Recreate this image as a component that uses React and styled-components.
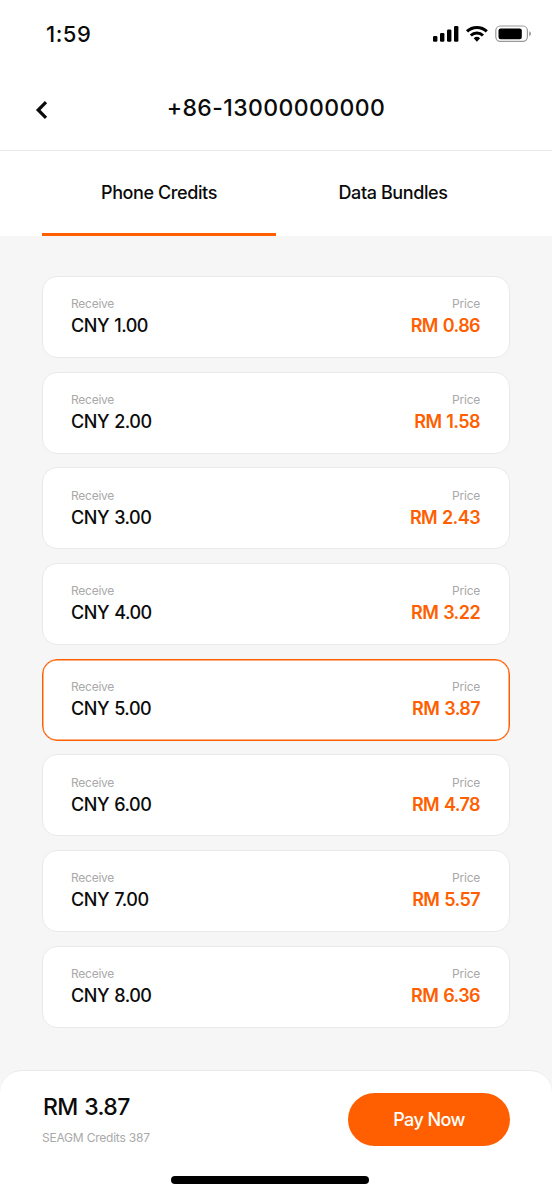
import React, { useState } from 'react';
import styled, { createGlobalStyle, ThemeProvider } from 'styled-components';

const theme = {
  primary: '#ff5f00',
  black: '#0b0b0b',
  muted: '#a9a9a9',
  line: '#e9e9e9',
  canvas: '#f6f6f6',
};

const packages = [
  { id: 1, receive: 'CNY 1.00', price: 'RM 0.86' },
  { id: 2, receive: 'CNY 2.00', price: 'RM 1.58' },
  { id: 3, receive: 'CNY 3.00', price: 'RM 2.43' },
  { id: 4, receive: 'CNY 4.00', price: 'RM 3.22' },
  { id: 5, receive: 'CNY 5.00', price: 'RM 3.87' },
  { id: 6, receive: 'CNY 6.00', price: 'RM 4.78' },
  { id: 7, receive: 'CNY 7.00', price: 'RM 5.57' },
  { id: 8, receive: 'CNY 8.00', price: 'RM 6.36' },
];

const tabs = ['Phone Credits', 'Data Bundles'];

const GlobalStyle = createGlobalStyle`
  * {
    box-sizing: border-box;
  }
  body {
    margin: 0;
    font-family: Inter, 'Liberation Sans', sans-serif;
    -webkit-font-smoothing: antialiased;
  }
  button {
    margin: 0;
    padding: 0;
    border: 0;
    background: none;
    font: inherit;
    color: inherit;
    cursor: pointer;
  }
`;

const Screen = styled.div`
  display: flex;
  flex-direction: column;
  width: 552px;
  height: 1195px;
  overflow: hidden;
  color: ${({ theme: t }) => t.black};
  background: ${({ theme: t }) => t.canvas};
`;

const StatusBar = styled.div`
  display: flex;
  flex: none;
  align-items: center;
  justify-content: space-between;
  height: 68px;
  padding: 0 20px 0 46px;
  background: white;
`;

const Clock = styled.span`
  font-size: 22px;
  line-height: 24px;
  font-weight: 500;
  letter-spacing: 0.5px;
`;

const StatusIcons = styled.div`
  display: flex;
  align-items: center;
`;

const Header = styled.header`
  display: grid;
  flex: none;
  grid-template-columns: 84px 1fr 84px;
  align-items: center;
  height: 83px;
  padding-bottom: 2px;
  border-bottom: 1px solid ${({ theme: t }) => t.line};
  background: white;
`;

const BackButton = styled.button`
  display: flex;
  padding-left: 35px;
  padding-top: 3px;
`;

const Title = styled.h1`
  margin: 0;
  text-align: center;
  font-size: 23px;
  line-height: 28px;
  font-weight: 500;
  letter-spacing: 0.4px;
  white-space: nowrap;
`;

const TabBar = styled.nav`
  display: flex;
  flex: none;
  height: 85px;
  padding: 0 42px;
  background: white;
`;

const Tab = styled.button`
  flex: 1;
  padding-top: 1px;
  border-bottom: 3px solid
    ${({ $active, theme: t }) => ($active ? t.primary : 'transparent')};
  font-size: 18px;
  font-weight: 500;
  letter-spacing: -0.4px;
`;

const PackageList = styled.main`
  display: flex;
  flex: 1;
  flex-direction: column;
  gap: 13.67px;
  min-height: 0;
  padding: 40px 42px 0;
`;

const PackageCard = styled.button`
  display: flex;
  flex: none;
  justify-content: space-between;
  height: 82px;
  padding: 19.4px 29px 0 28px;
  border: 1px solid
    ${({ $selected, theme: t }) => ($selected ? t.primary : t.line)};
  box-shadow: ${({ $selected, theme: t }) =>
    $selected ? `inset 0 0 0 0.5px ${t.primary}` : 'none'};
  border-radius: 15px;
  background: white;
`;

const Amount = styled.div`
  display: flex;
  flex-direction: column;
  align-items: ${({ $end }) => ($end ? 'flex-end' : 'flex-start')};
`;

const Label = styled.span`
  font-size: 12px;
  line-height: 16px;
  letter-spacing: -0.25px;
  color: ${({ theme: t }) => t.muted};
`;

const Value = styled.span`
  margin-top: 2px;
  font-size: 18px;
  line-height: 24px;
  font-weight: 500;
  letter-spacing: -0.45px;
  word-spacing: 0.8px;
  white-space: nowrap;
`;

const Price = styled(Value)`
  font-weight: 600;
  letter-spacing: -0.6px;
  word-spacing: 1px;
  color: ${({ theme: t }) => t.primary};
`;

const Footer = styled.footer`
  display: flex;
  flex: none;
  flex-direction: column;
  justify-content: space-between;
  height: 125px;
  padding: 22px 42px 11px;
  border-top: 1px solid ${({ theme: t }) => t.line};
  border-radius: 22px 22px 0 0;
  background: white;
`;

const Checkout = styled.div`
  display: flex;
  justify-content: space-between;
`;

const Total = styled.div`
  padding-left: 1px;
  font-size: 23px;
  line-height: 28px;
  font-weight: 500;
  letter-spacing: -0.6px;
  word-spacing: 1px;
`;

const Credits = styled.div`
  margin-top: 9px;
  font-size: 12px;
  line-height: 16px;
  letter-spacing: -0.22px;
  color: ${({ theme: t }) => t.muted};
`;

const PayButton = styled.button`
  width: 162px;
  height: 53px;
  border-radius: 27px;
  font-size: 18px;
  font-weight: 500;
  letter-spacing: -0.6px;
  color: white;
  background: ${({ theme: t }) => t.primary};
`;

const HomeIndicator = styled.div`
  width: 198px;
  height: 8px;
  margin-left: 129px;
  border-radius: 4px;
  background: black;
`;

function StatusGlyphs() {
  return (
    <svg width="100" height="20" viewBox="432 24 100 20">
      <rect x="433" y="36" width="4.4" height="5.7" rx="1.2" />
      <rect x="440" y="33" width="4.4" height="8.7" rx="1.2" />
      <rect x="447" y="29.5" width="4.4" height="12.2" rx="1.2" />
      <rect x="454" y="26" width="4.4" height="15.7" rx="1.2" />
      <g fill="none" stroke="black" strokeWidth="3">
        <path d="M467 31.4a14.2 14.2 0 0 1 19.8 0" />
        <path d="M470.8 35.5a8.8 8.8 0 0 1 12.2 0" />
      </g>
      <path d="M473.7 38.3a4.7 4.7 0 0 1 6.4 0l-3.2 3.4z" />
      <rect x="495.8" y="26" width="31.6" height="15.4" rx="4.6" fill="none" stroke="#999" strokeWidth="1.2" />
      <rect x="498.5" y="28.4" width="23.3" height="10.8" rx="2.2" />
      <path d="M529.2 31.3c2.4 1 2.4 3.9 0 4.9z" fill="#999" />
    </svg>
  );
}

function BackIcon() {
  return (
    <svg width="13" height="20" viewBox="0 0 13 20" fill="none">
      <path d="M11 2.2 3.2 10l7.8 7.8" stroke="#0b0b0b" strokeWidth="3.2" />
    </svg>
  );
}

export default function App() {
  const [activeTab, setActiveTab] = useState(tabs[0]);
  const [selectedId, setSelectedId] = useState(5);
  const selected = packages.find((item) => item.id === selectedId);
  const credits = Math.round(Number(selected.price.replace('RM ', '')) * 100);

  return (
    <ThemeProvider theme={theme}>
      <GlobalStyle />
      <Screen>
        <StatusBar>
          <Clock>1:59</Clock>
          <StatusIcons>
            <StatusGlyphs />
          </StatusIcons>
        </StatusBar>
        <Header>
          <BackButton aria-label="Back">
            <BackIcon />
          </BackButton>
          <Title>+86-13000000000</Title>
        </Header>
        <TabBar>
          {tabs.map((tab) => (
            <Tab
              key={tab}
              $active={tab === activeTab}
              onClick={() => setActiveTab(tab)}
            >
              {tab}
            </Tab>
          ))}
        </TabBar>
        <PackageList>
          {packages.map(({ id, receive, price }) => (
            <PackageCard
              key={id}
              $selected={id === selectedId}
              onClick={() => setSelectedId(id)}
            >
              <Amount>
                <Label>Receive</Label>
                <Value>{receive}</Value>
              </Amount>
              <Amount $end>
                <Label>Price</Label>
                <Price>{price}</Price>
              </Amount>
            </PackageCard>
          ))}
        </PackageList>
        <Footer>
          <Checkout>
            <div>
              <Total>{selected.price}</Total>
              <Credits>SEAGM Credits {credits}</Credits>
            </div>
            <PayButton>Pay Now</PayButton>
          </Checkout>
          <HomeIndicator />
        </Footer>
      </Screen>
    </ThemeProvider>
  );
}
